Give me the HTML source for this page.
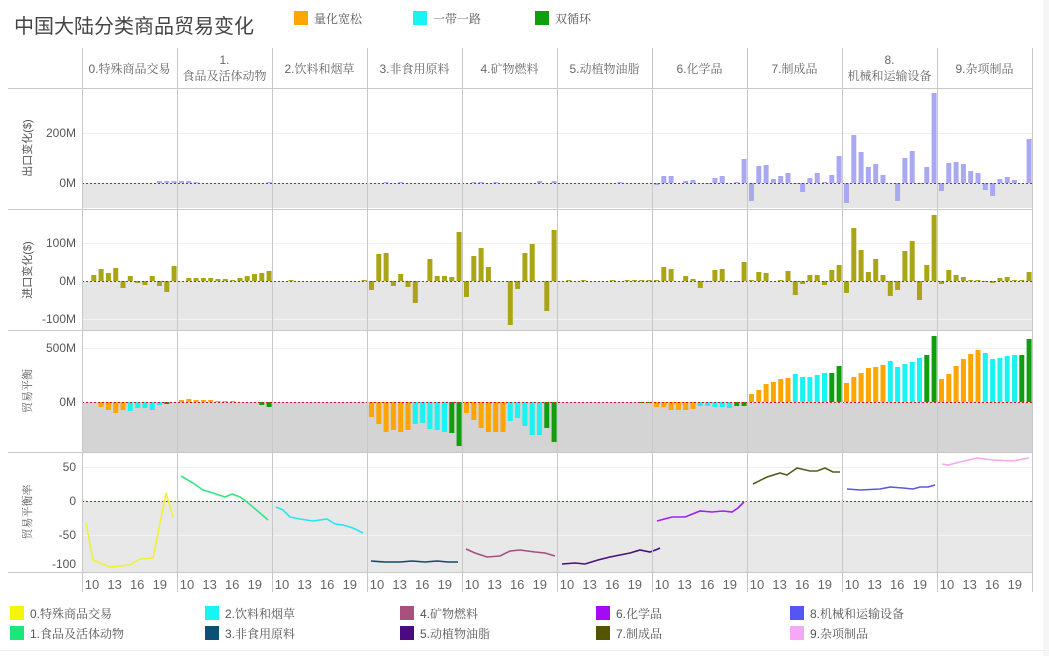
<!DOCTYPE html>
<html><head><meta charset="utf-8">
<style>
html,body{margin:0;padding:0;background:#fff;width:1049px;height:656px;overflow:hidden}
svg text{font-family:"Liberation Sans","Noto Serif CJK SC",serif}
svg text.t{font-family:"Liberation Sans","Noto Sans CJK SC",sans-serif}
</style></head>
<body>
<svg id="s" width="1049" height="656" viewBox="0 0 1049 656" xmlns="http://www.w3.org/2000/svg">
<rect x="1043" y="0" width="6" height="656" fill="#f6f6f6"/>
<text class="t" x="14" y="33" font-size="20" fill="#444">中国大陆分类商品贸易变化</text>
<rect x="294" y="11" width="14" height="14" fill="#ffa500"/><text x="314" y="23" font-size="12" fill="#555">量化宽松</text>
<rect x="413" y="11" width="14" height="14" fill="#19f3f3"/><text x="433" y="23" font-size="12" fill="#555">一带一路</text>
<rect x="535" y="11" width="14" height="14" fill="#0e9e0e"/><text x="555" y="23" font-size="12" fill="#555">双循环</text>
<g id="g"></g>
</svg>
<script>
var g=document.getElementById('g'),h='';
function R(x,y,w,hh,c){h+='<rect x="'+x+'" y="'+y+'" width="'+w+'" height="'+hh+'" fill="'+c+'"/>';}
function L(x1,y1,x2,y2,c,extra){h+='<line x1="'+x1+'" y1="'+y1+'" x2="'+x2+'" y2="'+y2+'" stroke="'+c+'" stroke-width="1" '+(extra||'')+'/>';}
function T(x,y,s,sz,c,anch,tr,cls){h+='<text '+(cls?'class="'+cls+'" ':'')+'x="'+x+'" y="'+y+'" font-size="'+sz+'" fill="'+c+'" text-anchor="'+(anch||'start')+'" '+(tr?'transform="'+tr+'"':'')+'>'+s+'</text>';}
var X0=82,CW=95;
R(X0,183,950,25,'#e6e6e6');R(X0,281,950,49,'#e6e6e6');R(X0,402,950,50,'#d4d4d4');R(X0,501,950,71,'#e8e8e8');
[133,243,319,348,467,535].forEach(function(y){L(X0,y+.5,1032,y+.5,y>501||y==319?'#f4f4f4':'#efefef');});
function bars(data,zero,col){for(var c=0;c<10;c++){var d=data[c];if(!d)continue;for(var i=0;i<13;i++){var v=d[i]||0;if(!v)continue;var x=X0+c*CW+2+i*7.3;var cc=typeof col=='string'?col:col(i);if(v>0)R(x.toFixed(1),zero-v,5,v,cc);else R(x.toFixed(1),zero,5,-v,cc);}}}
var r1=[[0,0,0,0,0,0,0,0,0,0,2,2,2],[2,2,1,0,0,0,0,0,0,0,0,0,1],[0,0,0,0,0,0,0,0,0,0,0,0,0],[0,0,1,0,1,0,0,0,0,0,0,0,0],[0,1,1,0,1,0,0,0,0,0,2,0,2],[0,0,0,0,0,0,0,0,1,0,0,0,0],
[-2,7,7,0,2,3,0,-1,5,7,0,1,24],[-18,17,18,4,7,10,-1,-9,5,10,1,8,27],[-20,48,31,16,19,8,0,-18,25,32,-1,16,90],[-8,20,21,19,12,10,-7,-13,4,6,3,0,44]];
bars(r1,183,'#a9a9f3');
var r2=[[0,6,12,8,13,-7,5,-2,-4,5,-5,-11,15],[0,3,3,3,3,2,2,1,3,5,7,8,10],[0,0,1,0,0,0,0,0,0,0,0,0,1],[-9,27,28,-5,7,-6,-22,0,22,5,5,4,49],[-16,25,33,14,0,0,-44,-8,28,37,0,-30,51],[0,1,0,1,0,0,0,1,0,1,1,1,1],
[1,14,12,0,5,2,-7,-1,11,12,0,-1,19],[1,9,8,0,1,10,-14,-3,6,6,-4,11,16],[-12,53,31,9,22,6,-15,-9,30,40,-19,16,66],[-3,11,6,4,1,1,-1,-2,3,4,1,1,9]];
bars(r2,281,'#aaa514');
var r3=[[0,0,-5,-8,-11,-8,-9,-6,-6,-8,-3,-2,0],[2,3,2,2,2,1,1,1,0,0,0,-3,-5],[0,0,0,0,0,0,0,0,0,0,0,0,0],[-15,-22,-30,-28,-30,-28,-22,-21,-27,-28,-30,-31,-44],[-11,-18,-26,-30,-30,-30,-19,-16,-24,-33,-33,-26,-40],[0,0,0,0,0,0,0,0,0,0,0,-1,-1],
[-5,-5,-8,-8,-8,-7,-4,-4,-5,-5,-6,-4,-4],[8,12,18,20,23,24,28,25,25,27,29,29,36],[19,25,29,34,35,37,41,35,38,40,44,47,66],[23,28,36,43,48,52,49,43,44,46,47,47,63]];
bars(r3,402,function(i){return i<6?'#ffa500':i<11?'#19f3f3':'#0e9e0e';});
[183,281,402,501].forEach(function(y){L(X0,y+.5,1032,y+.5,'#dd1122','stroke-dasharray="2,2"');});
var lines=[['#f0f03a','86,523 93,560 110,567 130,565 140,559 153,558 158,533 166,493 173,517'],
['#33e585','181,476 193,483 203,490 213,493 225,497 232,494 240,497 247,502 260,513 268,520'],
['#22e8ee','276,507 283,510 290,517 300,519 313,521 327,519 335,524 343,525 353,528 363,533'],
['#0e4a6e','371,561 385,562 400,562 412,561 425,562 437,561 448,562 458,562'],
['#a05080','466,549 475,553 487,557 500,556 510,551 520,550 535,552 545,553 555,556'],
['#4b0f7a','562,564 575,563 585,564 598,560 610,557 620,555 630,553 640,550 650,552 658,549 660,548'],
['#a020f0','657,521 672,517 685,517 700,511 712,512 723,511 732,512 738,508 744,502'],
['#5a5a1e','753,484 767,477 780,473 787,475 797,468 810,471 817,471 825,468 833,472 840,472'],
['#5858e0','847,489 860,490 880,489 890,487 903,488 913,489 920,487 928,487 935,485'],
['#f5a8f0','942,464 948,465 960,462 977,458 993,460 1013,461 1023,459 1029,458']];
lines.forEach(function(l){h+='<polyline points="'+l[1]+'" fill="none" stroke="'+l[0]+'" stroke-width="1.6"/>';});
[88,209,330,452,572].forEach(function(y){L(8,y+.5,1032,y+.5,'#c8c8c8');});
for(var c=0;c<=10;c++){var x=X0+c*CW+.5;L(x,48,x,592,'#c8c8c8');}
var hd=['0.特殊商品交易','','2.饮料和烟草','3.非食用原料','4.矿物燃料','5.动植物油脂','6.化学品','7.制成品','','9.杂项制品'];
for(var c=0;c<10;c++){var cx=X0+c*CW+CW/2;if(hd[c])T(cx,73,hd[c],12,'#666','middle');}
T(X0+CW*1.5,64,'1.',12,'#666','middle');T(X0+CW*1.5,80,'食品及活体动物',12,'#666','middle');
T(X0+CW*8.5,64,'8.',12,'#666','middle');T(X0+CW*8.5,80,'机械和运输设备',12,'#666','middle');
[[137,'200M'],[187,'0M'],[247,'100M'],[285,'0M'],[323,'-100M'],[352,'500M'],[406,'0M'],[471,'50'],[505,'0'],[539,'-50'],[568,'-100']].forEach(function(t){T(76,t[0],t[1],12,'#555','end');});
T(0,0,'出口变化($)',11,'#555','middle','translate(31,148) rotate(-90)','t');
T(0,0,'进口变化($)',11,'#555','middle','translate(31,270) rotate(-90)','t');
T(0,0,'贸易平衡',11,'#555','middle','translate(31,391) rotate(-90)');
T(0,0,'贸易平衡率',11,'#555','middle','translate(31,512) rotate(-90)');
for(var c=0;c<10;c++){var b=X0+c*CW;['10','13','16','19'].forEach(function(s,k){T(b+10+k*22.6,589,s,13,'#666','middle');});}
var lg=[['#f5f50a','0.特殊商品交易',10,606],['#19e878','1.食品及活体动物',10,626],['#19f3f3','2.饮料和烟草',205,606],['#0e4f78','3.非食用原料',205,626],
['#a8507e','4.矿物燃料',400,606],['#4c0a82','5.动植物油脂',400,626],['#a50af5','6.化学品',596,606],['#555500','7.制成品',596,626],['#5555f5','8.机械和运输设备',790,606],['#f5a8f5','9.杂项制品',790,626]];
lg.forEach(function(l){R(l[2],l[3],14,14,l[0]);T(l[2]+20,l[3]+12,l[1],12,'#555');});
L(0,650.5,1049,650.5,'#eeeeee');
g.innerHTML=h;
</script>
</body></html>
